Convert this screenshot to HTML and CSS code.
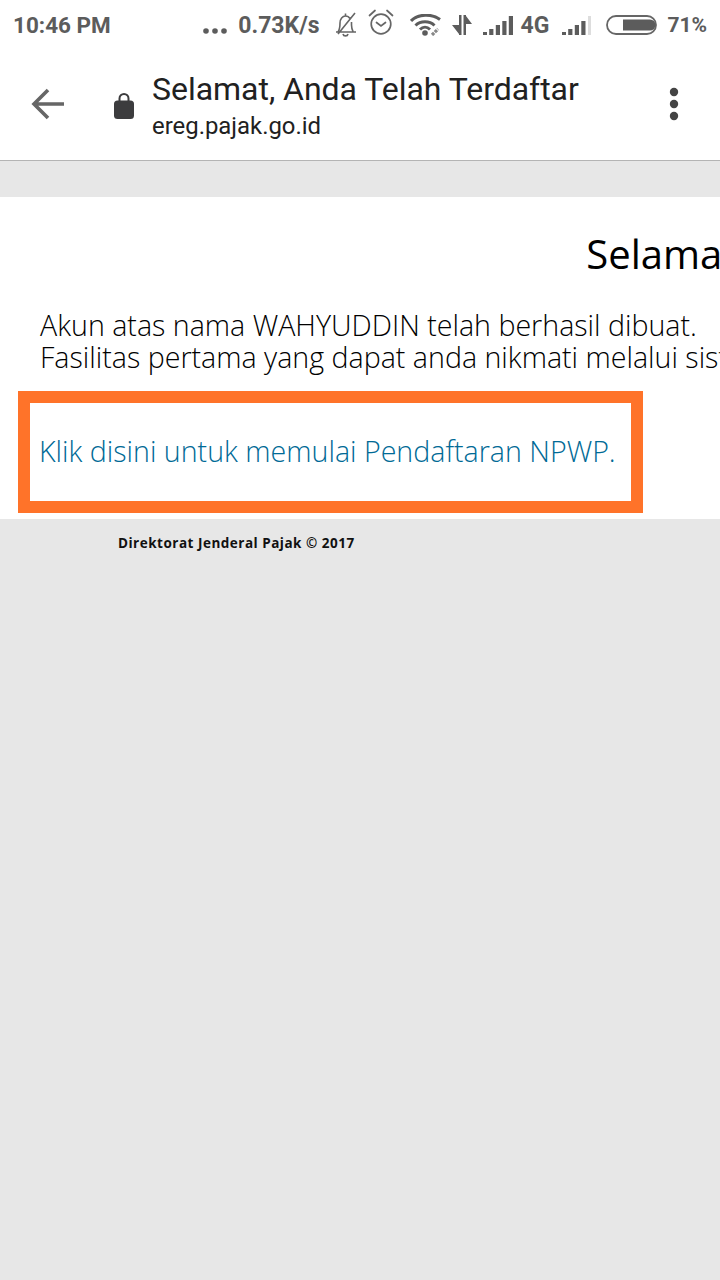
FILE: index.html
```html
<!DOCTYPE html>
<html lang="id">
<head>
<meta charset="utf-8">
<title>Selamat, Anda Telah Terdaftar</title>
<link rel="stylesheet" href="styles.css">
</head>
<body>
<div class="status">
  <span class="time">10:46 PM</span>
  <div class="status-right">
    <svg class="dots" width="24" height="6" viewBox="0 0 24 6"><circle cx="3" cy="3" r="2.800" fill="#5c5c5c"/><circle cx="12" cy="3" r="2.800" fill="#5c5c5c"/><circle cx="21" cy="3" r="2.800" fill="#5c5c5c"/></svg>
    <span class="speed">0.73K/s</span>
    <svg class="ic-bell" width="22" height="26" viewBox="0 0 22 26" fill="none" stroke="#666" stroke-width="1.600"><path d="M1 20h20M3 20c2-3 2-6 2-9 0-4 2.500-7 5.500-7 2 0 3.500.8 4.500 2.500M16.500 10v3c0 3 .7 5 1.700 7M10.500 1.500V4M8 22c.5 2.500 4.500 2.500 5 0M3 22 20 1"/></svg>
    <svg class="ic-alarm" width="26" height="26" viewBox="0 0 26 26" fill="none" stroke="#666" stroke-width="1.700"><circle cx="13" cy="15" r="9.800"/><path d="M8.500 13.500l4.500 3.500 4.500-3.500M1.500 6.500l5.500-5M24.500 6.500l-5.500-5" stroke-linecap="round"/></svg>
    <svg class="ic-wifi" width="32" height="22" viewBox="0 0 32 22" fill="none" stroke="#5c5c5c" stroke-width="3"><path d="M1 7C8-.5 22-.5 30 5.500M5.500 11.500c5-5 14-5 19 0M10 15.500c3-3 7-3 10 0"/><circle cx="15" cy="19" r="2.800" fill="#5c5c5c" stroke="none"/><path d="M22 21l6-6" stroke-width="3.200" stroke-dasharray="3 1" stroke="#888"/></svg>
    <svg class="ic-arrows" width="20" height="20" viewBox="0 0 20 20" fill="#5c5c5c"><path d="M7 0h2.500v20H7zM0 10h7v9zM11.500 0H14v20h-2.500zM14 1l6 8h-6z"/></svg>
    <svg class="ic-signal" width="30" height="20" viewBox="0 0 30 20" fill="#5c5c5c"><path d="M0 17h4v3H0zM6.200 14h4.200v6H6.200zM12.800 10H17v10h-4.200zM19.300 6h4.200v14h-4.200zM25.800 1H30v19h-4.200z"/></svg>
    <span class="net">4G</span>
    <svg class="ic-signal-b" width="30" height="20" viewBox="0 0 30 20" fill="#5c5c5c"><path d="M0 17h4v3H0zM6.200 14h4.200v6H6.200zM12.800 10H17v10h-4.200zM19.300 6h4.200v14h-4.200z"/><path d="M26 1h3v19h-3z" fill="#ddd"/></svg>
    <svg class="ic-batt" width="51" height="20" viewBox="0 0 51 20"><rect x="1" y="1" width="49" height="18" rx="9" fill="none" stroke="#666" stroke-width="1.800"/><path d="M17 4.500h27a5.500 5.500 0 0 1 0 11H17z" fill="#5c5c5c"/></svg>
    <span class="pct">71%</span>
  </div>
</div>
<header class="toolbar">
  <svg class="ic-back" width="34" height="32" viewBox="0 0 34 32" fill="none" stroke="#666" stroke-width="3.600"><path d="M33 16H3M17 2 3 16l14 14"/></svg>
  <svg class="ic-lock" width="20" height="26" viewBox="0 0 20 26"><path d="M5.500 10V5.500a4.500 4.500 0 0 1 9 0V10" fill="none" stroke="#3c3c3e" stroke-width="2"/><rect y="7.500" width="20" height="18.500" rx="3.500" fill="#3c3c3e"/></svg>
  <div class="titles">
    <div class="title">Selamat, Anda Telah Terdaftar</div>
    <div class="url">ereg.pajak.go.id</div>
  </div>
  <svg class="ic-more" width="10" height="34" viewBox="0 0 10 34" fill="#444"><circle cx="5" cy="5" r="4.200"/><circle cx="5" cy="17" r="4.200"/><circle cx="5" cy="29" r="4.200"/></svg>
</header>
<main class="panel">
  <h1 class="heading">Selamat, Anda Telah Terdaftar</h1>
  <p class="body-text">Akun atas nama WAHYUDDIN telah berhasil dibuat.<br>Fasilitas pertama yang dapat anda nikmati melalui sistem ini adalah Pendaftaran NPWP.</p>
  <div class="callout"><a class="link" href="#">Klik disini untuk memulai Pendaftaran NPWP.</a></div>
</main>
<footer class="foot">Direktorat Jenderal Pajak © 2017</footer>
</body>
</html>
```
FILE: styles.css
```css
html, body { margin: 0; padding: 0; }
body { width: 720px; height: 1280px; overflow: hidden; background: #e7e7e7; font-family: "Open Sans", sans-serif; }
.status { height: 50px; background: #fff; display: flex; justify-content: space-between; align-items: center; padding: 0 13px; box-sizing: border-box; font-family: Roboto, sans-serif; font-weight: 700; font-size: 23px; color: #5c5c5c; white-space: nowrap; }
.time { font-size: 22.500px; }
.pct { font-size: 21px; }
.status-right { display: flex; align-items: center; }
.status svg { flex: none; }
.dots { margin-top: 12px; }
.speed { margin-left: 11px; }
.ic-bell { margin-left: 15px; margin-top: -1px; }
.ic-alarm { margin-left: 11px; margin-top: -7px; }
.ic-wifi { margin-left: 16px; margin-top: -1px; }
.ic-arrows { margin-left: 10px; margin-top: -1px; }
.ic-signal { margin-left: 11px; margin-top: -1px; }
.net { margin-left: 8px; }
.ic-signal-b { margin-left: 13px; margin-top: -1px; }
.ic-batt { margin-left: 14px; margin-right: 10px; margin-top: -1px; }
.toolbar { height: 111px; box-sizing: border-box; background: #fff; border-bottom: 1px solid #b4b4b4; display: flex; align-items: center; padding: 0 0 0 31px; }
.ic-back { flex: none; margin-top: -2px; }
.ic-lock { flex: none; margin-left: 49px; margin-top: 1px; }
.titles { margin-left: 18px; margin-top: 0; flex: 1; font-family: Roboto, sans-serif; color: #212121; }
.title { font-size: 32px; line-height: 40px; letter-spacing: -0.030px; }
.url { font-size: 23.900px; line-height: 32px; margin-top: 1px; }
.ic-more { flex: none; margin-right: 41px; margin-top: -2px; }
.panel { margin-top: 36px; height: 322px; background: #fff; overflow: hidden; box-sizing: border-box; padding-top: 30px; }
.heading { margin: 0; width: 1736px; font-size: 40px; line-height: 54px; font-weight: 400; color: #000; text-align: center; white-space: nowrap; }
.body-text { margin: 28px 0 0 40px; width: 1400px; font-size: 28.600px; line-height: 32px; font-weight: 300; color: #000; white-space: nowrap; }
.callout { margin: 18px 0 0 18px; width: 625px; height: 122px; box-sizing: border-box; border: 12px solid #ff7329; display: flex; align-items: center; padding: 0 0 4px 9px; }
.link { font-size: 28.600px; font-weight: 300; color: #006a96; text-decoration: none; white-space: nowrap; }
.foot { margin: 14px 0 0 118px; font-size: 13.500px; line-height: 20px; font-weight: 700; color: #111; letter-spacing: 0.500px; }
```
